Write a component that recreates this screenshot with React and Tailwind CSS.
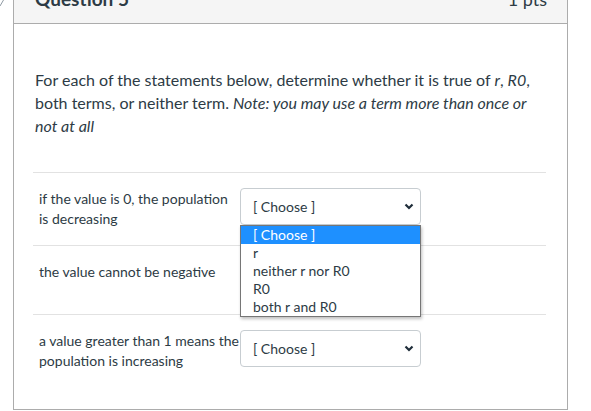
import React from 'react';

const options = ['[ Choose ]', 'r', 'neither r nor R0', 'R0', 'both r and R0'];

const rows = [
  { label: 'if the value is 0, the population is decreasing', open: true },
  { label: 'the value cannot be negative' },
  { label: 'a value greater than 1 means the population is increasing' },
];

function Chevron() {
  return (
    <svg width="10" height="7" viewBox="0 0 10 7" className="shrink-0">
      <polyline points="1.5,1.5 5,5 8.5,1.5" fill="none" stroke="#1f2d3a" strokeWidth="2.2" />
    </svg>
  );
}

function Select({ open }) {
  return (
    <div className="relative w-[181px]">
      <div className="h-[37px] flex items-center justify-between pl-[12px] pr-[6px] bg-white border border-[#c7cdd1] rounded-[4px] text-[14px] text-[#2d3b45]">
        <span>[ Choose ]</span>
        <Chevron />
      </div>
      {open && (
        <div className="absolute left-0 top-full w-full bg-white border border-[#767676] shadow-[1px_2px_3px_rgba(0,0,0,0.25)] z-10">
          {options.map((o, i) => (
            <div
              key={o}
              className={
                i === 0
                  ? 'h-[18px] leading-[18px] pl-[12px] text-[14px] bg-[#1e90ff] text-white'
                  : 'h-[18px] leading-[18px] pl-[12px] text-[14px] text-[#2d3b45]'
              }
            >
              {o}
            </div>
          ))}
        </div>
      )}
    </div>
  );
}

export default function App() {
  return (
    <div className="w-[591px] h-[411px] bg-white overflow-hidden flex font-['Lato','Noto_Sans',sans-serif] text-[#2d3b45]">
      <div className="w-[13px] shrink-0">
        <svg width="6" height="10" viewBox="0 0 6 10">
          <line x1="3.5" y1="0" x2="0" y2="6" stroke="#8f9aa3" strokeWidth="1" />
        </svg>
      </div>
      <div className="w-[555px] h-[435px] mt-[-25px] border border-[#acacac] flex flex-col shrink-0">
        <div className="h-[48px] bg-[#f5f5f5] border-b border-[#acacac] flex items-center justify-between pl-[21px] pr-[20px]">
          <span className="text-[19px] font-bold text-[#2d3b45]">Question 5</span>
          <span className="text-[18px] text-[#2d3b45]">1 pts</span>
        </div>
        <div className="pt-[44px] px-[21px] flex flex-col">
          <p className="text-[16px] leading-[23px]">
            For each of the statements below, determine whether it is true of <i>r</i>, <i>R0</i>, both terms, or
            neither term. <i>Note: you may use a term more than once or not at all</i>
          </p>
          <div className="mt-[35px] ml-[-2px] flex flex-col">
            {rows.map((r, i) => (
              <div key={i} className="border-t border-[#e2e2e2] pt-[15px] pb-[16px] flex items-start">
                <div className="w-[207px] pl-[6px] pr-[1px] text-[14px] leading-[20px] pt-[1px] shrink-0">
                  {r.label}
                </div>
                <Select open={r.open} />
              </div>
            ))}
          </div>
        </div>
      </div>
    </div>
  );
}
